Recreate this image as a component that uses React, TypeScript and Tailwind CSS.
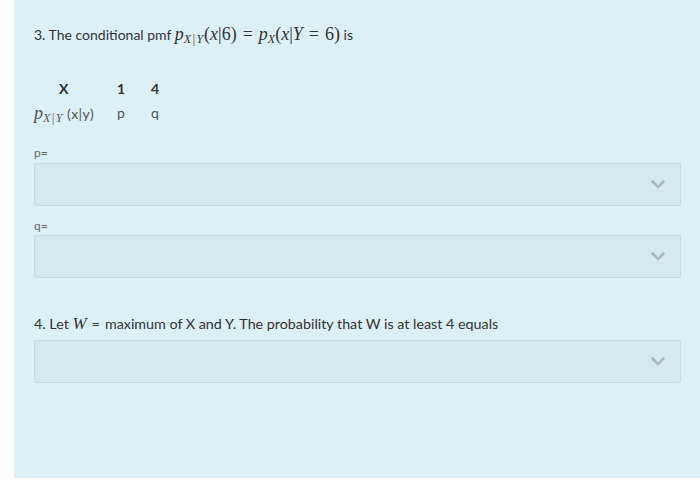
const Chevron = () => (
  <svg width="14" height="9" viewBox="0 0 14 9" fill="none">
    <polyline points="1.5,1.5 7,7 12.5,1.5" stroke="#aebbc1" strokeWidth="2.6" strokeLinecap="round" strokeLinejoin="round" />
  </svg>
);

const Select = () => (
  <div className="flex h-[43px] w-[647px] items-center justify-end rounded-[2px] border border-[#c8dce3] bg-[#d7e9f0] pr-[15px]">
    <Chevron />
  </div>
);

export default function App() {
  return (
    <div className="min-h-[480px] bg-white pl-[14px] pb-[2px] font-['Lato',sans-serif] text-[#333]">
      <div className="h-[478px] bg-[#def0f7] pl-[20px] pt-[24px]">
        <p className="text-[14px] leading-[20px]">
          3. The conditional pmf{' '}
          <span className="font-['Liberation_Serif',serif] text-[18px]">
            <i>p</i>
            <sub className="italic text-[12px] tracking-[1px]">X|Y</sub>
            (<i>x</i>|6)<span className="mx-[6px]">=</span>
            <i>p</i>
            <sub className="italic text-[12px]">X</sub>
            (<i>x</i>|<i>Y</i>
            <span className="mx-[6px]">=</span>6)
          </span>{' '}
          is
        </p>

        <div className="mt-[32px] grid grid-cols-[74px_26px_42px] text-[14px] leading-[24px]">
          <div className="pl-[25px] font-bold">X</div>
          <div className="text-center font-bold">1</div>
          <div className="text-center font-bold">4</div>
          <div className="whitespace-nowrap text-[#555]">
            <span className="font-['Liberation_Serif',serif] italic text-[18px]">
              p<sub className="text-[12px] tracking-[1px]">X|Y</sub>
            </span>{' '}
            <span className="tracking-[0.5px]">(x|y)</span>
          </div>
          <div className="text-center text-[#555]">p</div>
          <div className="text-center text-[#555]">q</div>
        </div>

        <p className="mt-[19px] text-[12px] leading-[16px] text-[#666]">p=</p>
        <div className="mt-[2px]">
          <Select />
        </div>

        <p className="mt-[12px] text-[12px] leading-[16px] text-[#666]">q=</p>
        <div className="mt-[1px]">
          <Select />
        </div>

        <p className="mt-[36px] text-[14.3px] leading-[20px]">
          4. Let <span className="font-['Liberation_Serif',serif] italic text-[17px]">W</span>
          <span className="mx-[5px]">=</span>maximum of X and Y. The probability that W is at least 4 equals
        </p>
        <div className="mt-[6px]">
          <Select />
        </div>
      </div>
    </div>
  );
}
